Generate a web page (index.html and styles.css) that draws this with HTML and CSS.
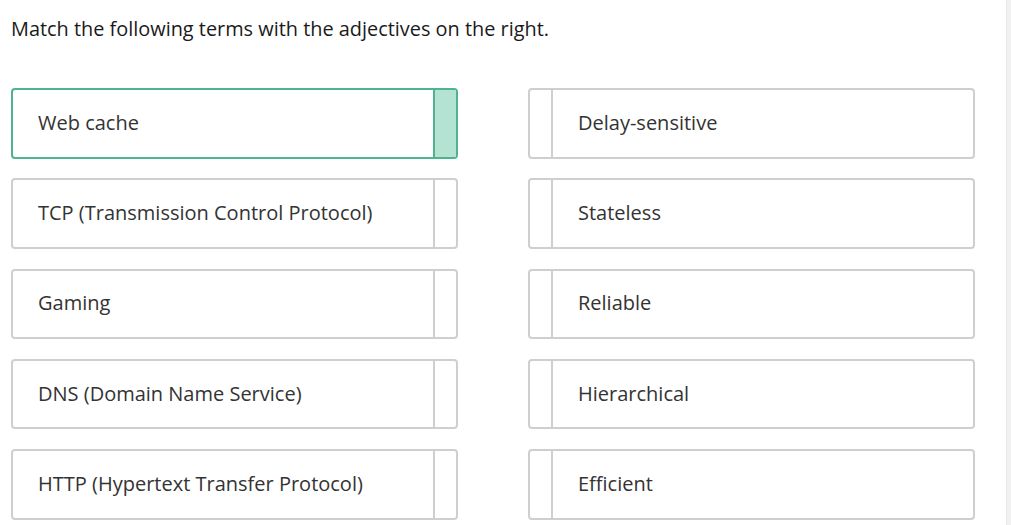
FILE: index.html
```html
<!DOCTYPE html>
<html>
<head>
<meta charset="utf-8">
<link rel="stylesheet" href="styles.css">
</head>
<body>
<div class="page">
  <main class="content">
    <h1 class="prompt">Match the following terms with the adjectives on the right.</h1>
    <div class="grid">
      <div class="card term active"><span class="label">Web cache</span><span class="handle"></span></div>
      <div class="card choice"><span class="handle"></span><span class="label">Delay-sensitive</span></div>
      <div class="card term"><span class="label">TCP (Transmission Control Protocol)</span><span class="handle"></span></div>
      <div class="card choice"><span class="handle"></span><span class="label">Stateless</span></div>
      <div class="card term"><span class="label">Gaming</span><span class="handle"></span></div>
      <div class="card choice"><span class="handle"></span><span class="label">Reliable</span></div>
      <div class="card term"><span class="label">DNS (Domain Name Service)</span><span class="handle"></span></div>
      <div class="card choice"><span class="handle"></span><span class="label">Hierarchical</span></div>
      <div class="card term"><span class="label">HTTP (Hypertext Transfer Protocol)</span><span class="handle"></span></div>
      <div class="card choice"><span class="handle"></span><span class="label">Efficient</span></div>
    </div>
  </main>
  <div class="scrolltrack"></div>
</div>
</body>
</html>
```
FILE: styles.css
```css
html, body {
  margin: 0;
  padding: 0;
  height: 100%;
  overflow: hidden;
  background: #fff;
}
body {
  font-family: "Open Sans", "Noto Sans", sans-serif;
  color: #333;
}
.page {
  display: flex;
  height: 100%;
}
.content {
  flex: 1;
  padding: 15px 0 0 11px;
}
.prompt {
  margin: 0 0 45px 0;
  font-size: 19.9px;
  font-weight: 400;
  color: #1a1a1a;
  line-height: 28px;
}
.grid {
  display: grid;
  grid-template-columns: 447px 447px;
  column-gap: 70px;
  row-gap: 19.75px;
}
.card {
  box-sizing: border-box;
  height: 70.5px;
  border: 2px solid #cfcfcf;
  border-radius: 4px;
  display: flex;
  align-items: stretch;
  background: #fff;
}
.label {
  flex: 1;
  display: flex;
  align-items: center;
  font-size: 20px;
  color: #333;
  padding-bottom: 2px;
}
.term .label {
  padding-left: 25px;
}
.choice .label {
  padding-left: 25px;
}
.handle {
  width: 21px;
  flex: none;
}
.term .handle {
  border-left: 2px solid #cfcfcf;
}
.choice .handle {
  border-right: 2px solid #cfcfcf;
}
.card.active {
  border-color: #4fb38d;
}
.card.active .handle {
  border-left-color: #4fb38d;
  background: #b4e3d3;
}
.scrolltrack {
  width: 4px;
  flex: none;
  background: #f1f1f1;
  border-left: 1px solid #e9e9e9;
}
```
